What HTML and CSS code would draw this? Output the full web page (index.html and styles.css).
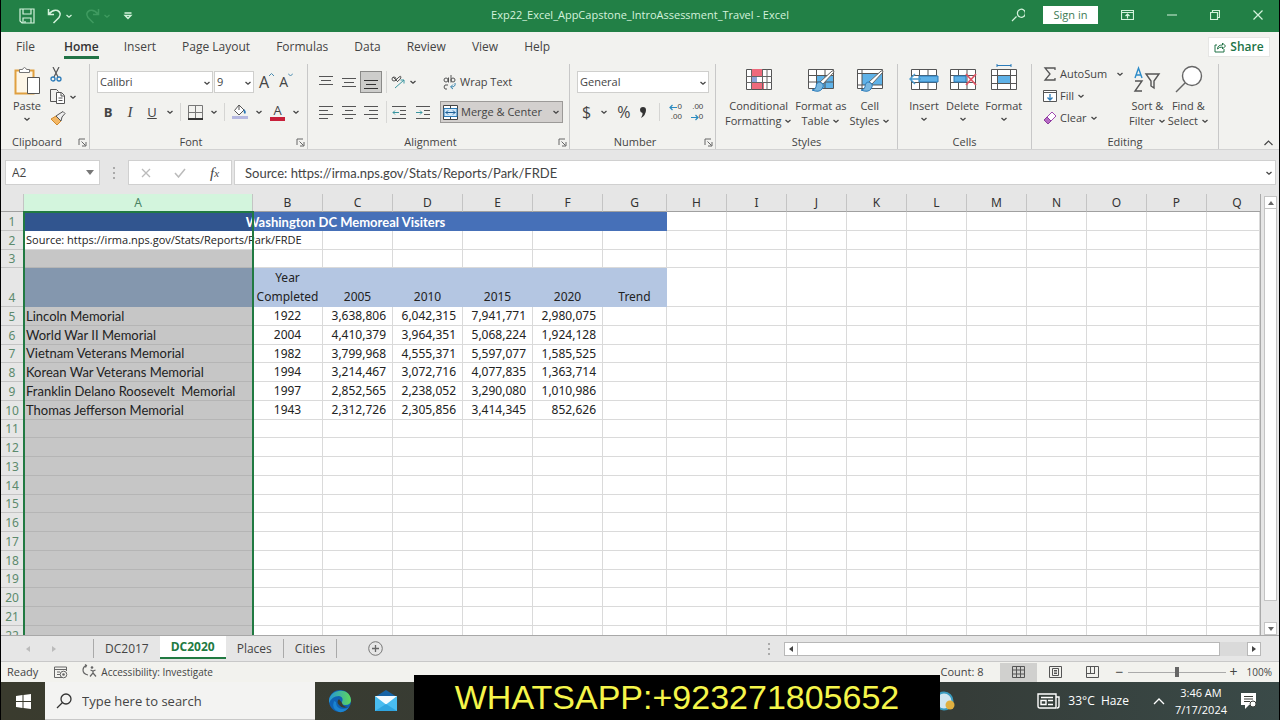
FILE: index.html
```html
<!DOCTYPE html>
<html lang="en">
<head>
<meta charset="utf-8">
<title>Exp22_Excel_AppCapstone_IntroAssessment_Travel - Excel</title>
<link rel="stylesheet" href="styles.css">
</head>
<body>
<svg class="defs" width="0" height="0" aria-hidden="true">
  <symbol id="chev" viewBox="0 0 8 8"><path d="M1.500 3 4 5.200 6.500 3" fill="none" stroke="currentColor" stroke-width="1.300"/></symbol>
  <symbol id="launch" viewBox="0 0 9 9"><path d="M1 7V1h6M3.500 3.500l4 4M8 4v4H4" fill="none" stroke="#666"/></symbol>
  <symbol id="brush" viewBox="0 0 30 30"><path d="M28 8 17 20l-3-2L26 7q2-1 2 1Z" fill="#fff" stroke="#666"/><path d="M14 18q-4 0-4 5-1 3-4 3 7 3 10-1 2-3 1-5Z" fill="#7ab8e0" stroke="#2b7bb9"/></symbol>
</svg>

<header class="titlebar">
  <div class="quick">
    <button aria-label="Save"><svg width="16" height="16" viewBox="0 0 16 16"><path d="M1 1h14v14H3l-2-2ZM4 1v5h8V1M4 15v-5h8v5M6 15v-2" fill="none" stroke="currentColor" stroke-width="1.200"/></svg></button>
    <button aria-label="Undo"><svg width="15" height="16" viewBox="0 0 15 16"><path d="M1.500 1v5.500H7M2 6q4-5 8.500-3.500Q15 5 12 9.500L6.500 15" fill="none" stroke="currentColor" stroke-width="1.500"/></svg><svg class="chev"><use href="#chev"/></svg></button>
    <button class="dim" aria-label="Redo"><svg width="15" height="16" viewBox="0 0 15 16"><path d="M13.500 1v5.500H8M13 6Q9 1 4.500 2.500 0 5 3 9.500L8.500 15" fill="none" stroke="currentColor" stroke-width="1.500"/></svg><svg class="chev"><use href="#chev"/></svg></button>
    <button aria-label="Customize toolbar"><svg width="10" height="8" viewBox="0 0 10 8"><path d="M1.500 1h7M2 3.500l3 3 3-3Z" fill="none" stroke="currentColor" stroke-width="1.300"/></svg></button>
  </div>
  <div class="doc-title">Exp22_Excel_AppCapstone_IntroAssessment_Travel - Excel</div>
  <div class="window">
    <button aria-label="Search"><svg width="14" height="14" viewBox="0 0 14 14"><path d="M5.500 8.500 1 13M9 1.500a4 4 0 1 1 0 7.500 4 4 0 0 1 0-7.500Z" fill="none" stroke="currentColor" stroke-width="1.200"/></svg></button>
    <button class="signin">Sign in</button>
    <button aria-label="Ribbon display options"><svg width="13" height="10" viewBox="0 0 13 10"><path d="M.5.5h12v9H.5ZM.5 2.500h12M6.500 8.500V4M4.500 6l2-2 2 2" fill="none" stroke="currentColor" stroke-width="1.200"/></svg></button>
    <button aria-label="Minimize"><svg width="10" height="10" viewBox="0 0 10 10"><path d="M0 5h10" stroke="currentColor"/></svg></button>
    <button aria-label="Restore"><svg width="10" height="10" viewBox="0 0 10 10"><path d="M.5 2.500h7v7h-7ZM2.500 2.500v-2h7v7h-2" fill="none" stroke="currentColor" stroke-width="1.200"/></svg></button>
    <button aria-label="Close"><svg width="10" height="10" viewBox="0 0 10 10"><path d="m.5.5 9 9m0-9-9 9" stroke="currentColor" stroke-width="1.200"/></svg></button>
  </div>
</header>

<nav class="tabs">
  <button>File</button><button class="active">Home</button><button>Insert</button><button>Page Layout</button><button>Formulas</button><button>Data</button><button>Review</button><button>View</button><button>Help</button>
  <button class="share"><svg width="12" height="12" viewBox="0 0 12 12"><path d="M3 4H1v7h9V8M3.500 8q0-4 5-4V2l3 3-3 3V6Q5 6 3.500 8Z" fill="none" stroke="currentColor"/></svg>Share</button>
</nav>

<section class="ribbon" aria-label="Ribbon">
  <div class="group clipboard">
    <div class="tools">
      <button class="big"><svg width="27" height="30" viewBox="0 0 27 30"><path d="M1.500 4.500h18v23h-18Z" fill="#fdf6e8" stroke="#e0a040" stroke-width="2"/><path d="M5.500 6.500v-3h3q2-4 4 0h3v3Z" fill="#fff" stroke="#777"/><path d="M13.500 11.500h12v16h-12Z" fill="#fff" stroke="#555"/></svg><span>Paste</span><svg class="chev"><use href="#chev"/></svg></button>
      <div class="stack">
        <button aria-label="Cut"><svg width="12" height="15" viewBox="0 0 12 15"><path d="m3 0 5 10M9 0 4 10" stroke="#555" stroke-width="1.200"/><circle cx="3" cy="12" r="2" fill="none" stroke="#2b7bb9" stroke-width="1.300"/><circle cx="9" cy="12" r="2" fill="none" stroke="#2b7bb9" stroke-width="1.300"/></svg></button>
        <button aria-label="Copy"><svg width="16" height="15" viewBox="0 0 16 15"><path d="M6 12.500H.5V.5h6l2 2" fill="none" stroke="#555"/><path d="M6.500 3.500h5l3 3v8h-8ZM11 4v3h3M8.500 9h4M8.500 11.500h4" fill="#fff" stroke="#555"/></svg><svg class="chev"><use href="#chev"/></svg></button>
        <button aria-label="Format Painter"><svg width="16" height="15" viewBox="0 0 16 15"><path d="m1 8 5-3 5 5-4 4Z" fill="#f3b765" stroke="#d18a2c"/><path d="m6 5 3-2 4-2.500 2 2L12 6l-1 4Z" fill="#eee" stroke="#555"/></svg></button>
      </div>
    </div>
    <div class="caption"><span>Clipboard</span><button aria-label="Clipboard settings"><svg width="9" height="9"><use href="#launch"/></svg></button></div>
  </div>

  <div class="group font">
    <div class="rows">
      <div class="line">
        <label class="pick name"><select aria-label="Font"><option>Calibri</option></select><svg class="chev"><use href="#chev"/></svg></label>
        <label class="pick size"><select aria-label="Font size"><option>9</option></select><svg class="chev"><use href="#chev"/></svg></label>
        <button class="grow" aria-label="Increase font size"><b class="a16">A</b><svg width="5" height="4" viewBox="0 0 5 4"><path d="m0 3 2.500-2.500L5 3" fill="none" stroke="#4a8bb0"/></svg></button>
        <button class="grow" aria-label="Decrease font size"><b class="a14">A</b><svg width="5" height="4" viewBox="0 0 5 4"><path d="M0 .5 2.500 3 5 .5" fill="none" stroke="#4a8bb0"/></svg></button>
      </div>
      <div class="line styles-line">
        <button class="glyph bold">B</button><button class="glyph ital">I</button><button class="glyph under">U</button><button aria-label="Underline options"><svg class="chev"><use href="#chev"/></svg></button>
        <i class="bar"></i>
        <button aria-label="Borders"><svg width="15" height="15" viewBox="0 0 15 15"><path d="M.5.5h14v14H.5ZM7.500 0v14M0 7.500h15" fill="none" stroke="#777"/><path d="M0 14h15" stroke="#333" stroke-width="2"/></svg></button><button aria-label="Border options"><svg class="chev"><use href="#chev"/></svg></button>
        <i class="bar"></i>
        <button aria-label="Fill color"><svg width="16" height="16" viewBox="0 0 16 16"><path d="m7 1 5 5-5 5-4.500-4.500ZM7 1v5" fill="#fff" stroke="#555"/><path d="M12 5q3 3 1 5-2-1-1-5" fill="#2b7bb9"/><path d="M0 12h16v3H0Z" fill="#b5b8e0"/></svg></button><button aria-label="Fill options"><svg class="chev"><use href="#chev"/></svg></button>
        <button class="glyph color">A</button><button aria-label="Font color options"><svg class="chev"><use href="#chev"/></svg></button>
      </div>
    </div>
    <div class="caption"><span>Font</span><button aria-label="Font settings"><svg width="9" height="9"><use href="#launch"/></svg></button></div>
  </div>

  <div class="group align">
    <div class="tools">
      <div class="pad">
        <button aria-label="Top align"><svg width="14" height="13" viewBox="0 0 14 13"><path d="M0 .5h14M2 4.500h10M0 8.500h14" stroke="#555"/></svg></button>
        <button aria-label="Middle align"><svg width="14" height="13" viewBox="0 0 14 13"><path d="M0 2.500h14M2 6.500h10M0 10.500h14" stroke="#555"/></svg></button>
        <button class="on" aria-label="Bottom align"><svg width="14" height="13" viewBox="0 0 14 13"><path d="M0 4.500h14M2 8.500h10M0 12.500h14" stroke="#333"/></svg></button>
        <button class="lined wide" aria-label="Orientation"><svg width="16" height="14" viewBox="0 0 16 14"><circle cx="4" cy="4" r="2" fill="none" stroke="#555"/><path d="m3 2 5 5M5 6l4-4M8 6q3-2 3-4 0-1.500-2 0" fill="none" stroke="#555"/><path d="m5 13 9-8M10.500 5H14v3.500" fill="none" stroke="#3a96a0"/></svg><svg class="chev"><use href="#chev"/></svg></button>
        <button aria-label="Align left"><svg width="14" height="13" viewBox="0 0 14 13"><path d="M0 .5h14M0 4.500h9M0 8.500h14M0 12.500h9" stroke="#555"/></svg></button>
        <button aria-label="Center"><svg width="14" height="13" viewBox="0 0 14 13"><path d="M0 .5h14M3 4.500h8M0 8.500h14M3 12.500h8" stroke="#555"/></svg></button>
        <button aria-label="Align right"><svg width="14" height="13" viewBox="0 0 14 13"><path d="M0 .5h14M5 4.500h9M0 8.500h14M5 12.500h9" stroke="#555"/></svg></button>
        <button class="lined" aria-label="Decrease indent"><svg width="14" height="13" viewBox="0 0 14 13"><path d="M0 .5h14M8 4.500h6M8 8.500h6M0 12.500h14" stroke="#555"/><path d="M7 6.500H1M3 4.500l-2 2 2 2" fill="none" stroke="#3a96a0"/></svg></button>
        <button aria-label="Increase indent"><svg width="14" height="13" viewBox="0 0 14 13"><path d="M0 .5h14M8 4.500h6M8 8.500h6M0 12.500h14" stroke="#555"/><path d="M0 6.500h6M4 4.500l2 2-2 2" fill="none" stroke="#3a96a0"/></svg></button>
      </div>
      <div class="wraps">
        <button class="text-tool"><svg width="14" height="15" viewBox="0 0 14 15"><circle cx="3" cy="5" r="2" fill="none" stroke="#555"/><path d="M5.500 2.500v5M8 0v7.500M5 10H2q-2 2 0 4h2" fill="none" stroke="#555"/><circle cx="10" cy="5" r="2" fill="none" stroke="#555"/><path d="M12 8q1 4-4 4M10 9.500 7.500 12l2.500 2" fill="none" stroke="#3a86b0"/></svg>Wrap Text</button>
        <button class="text-tool on"><svg width="15" height="15" viewBox="0 0 15 15"><path d="M.5.5h14v14H.5Z" fill="#fff" stroke="#444"/><path d="M1 3.500h13v8H1Z" fill="#cfe6f7" stroke="#2b7bb9"/><path d="M7.500 1v2.500M7.500 12v2.500" stroke="#444"/><path d="M2.500 7.500h10M5 5.500l-2 2 2 2M10 5.500l2 2-2 2" fill="none" stroke="#1c5f96"/></svg>Merge &amp; Center<svg class="chev end"><use href="#chev"/></svg></button>
      </div>
    </div>
    <div class="caption"><span>Alignment</span><button aria-label="Alignment settings"><svg width="9" height="9"><use href="#launch"/></svg></button></div>
  </div>

  <div class="group number">
    <div class="rows">
      <div class="line"><label class="pick format"><select aria-label="Number format"><option>General</option></select><svg class="chev"><use href="#chev"/></svg></label></div>
      <div class="line num-line">
        <button class="sym">$</button><button aria-label="Currency options"><svg class="chev"><use href="#chev"/></svg></button><button class="sym">%</button>
        <button aria-label="Comma style"><svg width="8" height="13" viewBox="0 0 8 13"><path d="M1 4a3 3 0 0 1 6 0q0 5-5 8 2-3 1.500-5Q1 6.500 1 4Z" fill="#333"/></svg></button>
        <i class="bar"></i>
        <button class="dec" aria-label="Increase decimal"><span><svg width="8" height="7" viewBox="0 0 8 7"><path d="M8 3.500H1M3.500 1 1 3.500 3.500 6" fill="none" stroke="#2b8bc0" stroke-width="1.200"/></svg>0</span><span>.00</span></button>
        <button class="dec" aria-label="Decrease decimal"><span>.00</span><span><svg width="8" height="7" viewBox="0 0 8 7"><path d="M0 3.500h7M4.500 1 7 3.500 4.500 6" fill="none" stroke="#2b8bc0" stroke-width="1.200"/></svg>0</span></button>
      </div>
    </div>
    <div class="caption"><span>Number</span><button aria-label="Number settings"><svg width="9" height="9"><use href="#launch"/></svg></button></div>
  </div>

  <div class="group looks">
    <div class="tools">
      <button class="big"><svg width="30" height="30" viewBox="0 0 30 30"><path d="M2.500 5.500h25v20h-25Z" fill="#fff" stroke="#555"/><path d="M7 5h11v7H7ZM7 18h13v7H7Z" fill="#ee6a7c"/><path d="M7 12h6v6H7Z" fill="#8fa4d8"/><path d="M7.500 5v21M18.500 5v21M23 5v21M2 12.500h26M2 18.500h26" fill="none" stroke="#666"/></svg><span>Conditional<br>Formatting <svg class="chev"><use href="#chev"/></svg></span></button>
      <button class="big"><svg width="30" height="30" viewBox="0 0 30 30"><path d="M2.500 5.500h25v19h-25Z" fill="#fff" stroke="#555"/><path d="M10 12h17v12H10Z" fill="#5fb2e8"/><path d="M10.500 5v20M19 5v20M2 11.500h26M2 18h26" fill="none" stroke="#555"/><use href="#brush"/></svg><span>Format as<br>Table <svg class="chev"><use href="#chev"/></svg></span></button>
      <button class="big"><svg width="30" height="30" viewBox="0 0 30 30"><path d="M2.500 5.500h25v19h-25Z" fill="#fff" stroke="#555"/><path d="M7 10h20v11H7Z" fill="#5fb2e8"/><path d="M7 5v20M2 9.500h26M2 21h26" fill="none" stroke="#555"/><use href="#brush"/></svg><span>Cell<br>Styles <svg class="chev"><use href="#chev"/></svg></span></button>
    </div>
    <div class="caption"><span>Styles</span></div>
  </div>

  <div class="group cells">
    <div class="tools">
      <button class="big"><svg width="30" height="30" viewBox="0 0 30 30"><path d="M2.500 5.500h25v20h-25Z" fill="#fff" stroke="#555"/><path d="M10.500 5v20M19 5v20M2 11.500h26M2 18.500h26" stroke="#555"/><path d="M10 12h19v6H10Z" fill="#5fb2e8" stroke="#2b7bb9"/><path d="M12 15H1M6 10l-5 5 5 5" fill="none" stroke="#4a9cd0" stroke-width="1.500"/></svg><span>Insert</span><svg class="chev"><use href="#chev"/></svg></button>
      <button class="big"><svg width="30" height="30" viewBox="0 0 30 30"><path d="M2.500 5.500h25v20h-25Z" fill="#fff" stroke="#555"/><path d="M10.500 5v20M19 5v20M2 11.500h26M2 18.500h26" stroke="#555"/><path d="M6 12h12v6H6Z" fill="#5fb2e8" stroke="#2b7bb9"/><path d="m18 10 10 11M28 10 18 21" stroke="#e05565" stroke-width="1.800"/></svg><span>Delete</span><svg class="chev"><use href="#chev"/></svg></button>
      <button class="big"><svg width="30" height="30" viewBox="0 0 30 30"><path d="M2.500 5.500h25v20h-25Z" fill="#fff" stroke="#555"/><path d="M9 12h12v7H9Z" fill="#5fb2e8"/><path d="M8.500 5v20M21.500 5v20M2 11.500h26M2 19.500h26" stroke="#555"/><path d="M8 1.500h14M8 0v3M22 0v3" stroke="#2b7bb9"/></svg><span>Format</span><svg class="chev"><use href="#chev"/></svg></button>
    </div>
    <div class="caption"><span>Cells</span></div>
  </div>

  <div class="group edit">
    <div class="tools">
      <div class="stack">
        <button class="text-tool"><svg width="14" height="14" viewBox="0 0 14 14"><path d="M12 3V1H2l5 6-5 6h10v-2" fill="none" stroke="#555" stroke-width="1.300"/></svg>AutoSum<svg class="chev end"><use href="#chev"/></svg></button>
        <button class="text-tool"><svg width="14" height="14" viewBox="0 0 14 14"><path d="M.5 1.500h13v11H.5ZM0 3.500h14" fill="#fff" stroke="#555"/><path d="M7 5v6M4.500 8.500 7 11l2.500-2.500" fill="none" stroke="#2b7bb9" stroke-width="1.300"/></svg>Fill <svg class="chev"><use href="#chev"/></svg></button>
        <button class="text-tool"><svg width="14" height="14" viewBox="0 0 14 14"><path d="m1 9 8-8 4 4-8 8Z" fill="#fff" stroke="#a04ab0"/><path d="m1 9 3-3 4 4-3 3Z" fill="#b66cc4" stroke="#8c3a9c"/></svg>Clear <svg class="chev"><use href="#chev"/></svg></button>
      </div>
      <button class="big"><svg width="28" height="30" viewBox="0 0 28 30"><path d="M2 14 5.500 4 9 14M3 11h5" fill="none" stroke="#2b8bc9" stroke-width="1.400"/><path d="M2 17h7L2 27h7M13 10h13l-5 7v7l-3-2v-5Z" fill="none" stroke="#555" stroke-width="1.400"/></svg><span>Sort &amp;<br>Filter <svg class="chev"><use href="#chev"/></svg></span></button>
      <button class="big"><svg width="30" height="30" viewBox="0 0 30 30"><circle cx="19" cy="12" r="9.500" fill="#fff" stroke="#666" stroke-width="1.400"/><path d="m12 19-9 9" stroke="#666" stroke-width="1.400"/></svg><span>Find &amp;<br>Select <svg class="chev"><use href="#chev"/></svg></span></button>
    </div>
    <div class="caption"><span>Editing</span></div>
  </div>
  <button class="collapse" aria-label="Collapse the ribbon"><svg width="9" height="6" viewBox="0 0 9 6"><path d="m.5 5 4-4 4 4" fill="none" stroke="#444" stroke-width="1.200"/></svg></button>
</section>

<section class="formula" aria-label="Formula bar">
  <label class="namebox"><input value="A2" aria-label="Name box"><svg width="8" height="5" viewBox="0 0 8 5"><path d="M0 0h8L4 5Z" fill="#777"/></svg></label>
  <span class="dots"></span>
  <div class="fx">
    <button aria-label="Cancel"><svg width="10" height="10" viewBox="0 0 10 10"><path d="m1 1 8 8m0-8L1 9" stroke="#bbb" stroke-width="1.300"/></svg></button>
    <button aria-label="Enter"><svg width="12" height="10" viewBox="0 0 12 10"><path d="m1 5 3.500 4L11 1" fill="none" stroke="#bbb" stroke-width="1.500"/></svg></button>
    <button class="fn">f<small>x</small></button>
  </div>
  <label class="entry"><input value="Source: https://irma.nps.gov/Stats/Reports/Park/FRDE" aria-label="Formula"><svg class="chev"><use href="#chev"/></svg></label>
</section>

<main class="work">
  <div class="sheet">
    <table>
      <colgroup><col class="c-head"><col class="c-a"><col class="c-b"><col class="c-num" span="4"><col class="c-g"><col class="c-std" span="9"><col></colgroup>
      <thead></thead>
      <tbody></tbody>
    </table>
    <div class="selection"></div>
  </div>
  <div class="vscroll"><button aria-label="Scroll up"><svg width="6" height="4" viewBox="0 0 6 4"><path d="M0 4h6L3 0Z" fill="#666"/></svg></button><div class="track"><span class="thumb"></span></div><button aria-label="Scroll down"><svg width="6" height="4" viewBox="0 0 6 4"><path d="M0 0h6L3 4Z" fill="#666"/></svg></button></div>
</main>

<div class="sheetbar">
  <div class="arrows"><svg width="4" height="6" viewBox="0 0 4 6"><path d="M4 0v6L0 3Z" fill="#bbb"/></svg><svg width="4" height="6" viewBox="0 0 4 6"><path d="M0 0v6l4-3Z" fill="#bbb"/></svg></div>
  <button>DC2017</button><button class="current">DC2020</button><button>Places</button><button>Cities</button>
  <button class="add" aria-label="New sheet"><svg width="15" height="15" viewBox="0 0 15 15"><circle cx="7.500" cy="7.500" r="6.800" fill="none" stroke="#777"/><path d="M7.500 4v7M4 7.500h7" stroke="#666" stroke-width="1.300"/></svg></button>
  <span class="dots"></span>
  <div class="hscroll"><button aria-label="Scroll left"><svg width="4" height="6" viewBox="0 0 4 6"><path d="M4 0v6L0 3Z" fill="#444"/></svg></button><div class="track"><span class="thumb"></span></div><button aria-label="Scroll right"><svg width="4" height="6" viewBox="0 0 4 6"><path d="M0 0v6l4-3Z" fill="#444"/></svg></button></div>
</div>

<div class="status">
  <span class="ready">Ready</span>
  <svg width="14" height="13" viewBox="0 0 14 13"><path d="M8 11.500H.5V1h12v4M.5 3.500h12M3 6h3M3 8.500h3" fill="none" stroke="#666"/><circle cx="9.500" cy="8.500" r="3.300" fill="none" stroke="#666"/><circle cx="9.500" cy="8.500" r="1.300" fill="#666"/></svg>
  <span class="access"><svg width="15" height="13" viewBox="0 0 15 13"><path d="M6 11Q1 10 1 6q0-3 3-4.500M3 .5l1.500 1L3.500 3.500M8.500 6l2.500 1 2.500-1M11 7v2l-3 3.500M11 9l3 3.500" fill="none" stroke="#666" stroke-width="1.200"/><circle cx="10" cy="3.500" r="1.300" fill="#666"/></svg>Accessibility: Investigate</span>
  <span class="count">Count: 8</span>
  <button class="view on" aria-label="Normal"><svg width="13" height="12" viewBox="0 0 13 12"><path d="M.5.500h12v11H.5ZM4.500 0v12M8.500 0v12M0 4h13M0 8h13" fill="none" stroke="#555"/></svg></button>
  <button class="view" aria-label="Page layout"><svg width="13" height="12" viewBox="0 0 13 12"><path d="M.5.500h12v11H.5ZM3.500 2.500h6v7h-6ZM5 4.500h3M5 6h3M5 7.500h3" fill="none" stroke="#555"/></svg></button>
  <button class="view" aria-label="Page break preview"><svg width="13" height="12" viewBox="0 0 13 12"><path d="M.5.500h12v11H.5ZM4.500 0v7M8.500 0v7M0 7.500h9" fill="none" stroke="#555"/></svg></button>
  <div class="zoom"><button aria-label="Zoom out">−</button><input type="range" min="10" max="190" value="101" aria-label="Zoom"><button aria-label="Zoom in">+</button></div>
  <span class="pct">100%</span>
</div>

<footer class="taskbar">
  <button class="start" aria-label="Start"><svg width="15" height="15" viewBox="0 0 15 15"><path d="M0 2l6.500-1v6H0ZM7.500 1 15 0v7H7.500ZM0 8h6.500v6L0 13ZM7.500 8H15v7l-7.500-1Z" fill="#fff"/></svg></button>
  <label class="search"><svg width="16" height="16" viewBox="0 0 16 16"><circle cx="10" cy="6" r="5" fill="none" stroke="#333" stroke-width="1.300"/><path d="M6.500 9.500 1 15" stroke="#333" stroke-width="1.300"/></svg><input placeholder="Type here to search" aria-label="Search"></label>
  <button class="app" aria-label="Edge"><svg width="24" height="24" viewBox="0 0 24 24"><defs><linearGradient id="eg" x1="0" x2="1"><stop offset="0" stop-color="#2496d8"/><stop offset="1" stop-color="#5fd85a"/></linearGradient></defs><circle cx="12" cy="12" r="11" fill="#0f62b5"/><path d="M1 12C1 0 22-3 23 11q0 5-6 5-4 0-3-3 2-5-3-6Q4 7 1 14Z" fill="url(#eg)"/><path d="M8 13q0 7 7 7 4 0 6-2-4 6-10 5-8-3-5-11Z" fill="#1b83d0"/><path d="M11 10q-3 3 0 6 3 4 9 2-5 0-6-4Z" fill="#3a3d30"/></svg></button>
  <button class="app" aria-label="Mail"><svg width="24" height="22" viewBox="0 0 24 22"><path d="M1 7 12 0l11 7v14H1Z" fill="#1564a8"/><path d="M1 6h22v15H1Z" fill="#49bdf0"/><path d="M1 6h22l-11 8.500Z" fill="#f4fbff"/><path d="m1 21 11-7 11 7Z" fill="#2fa5e0"/></svg></button>
  <div class="tray">
    <svg class="peek" width="16" height="20" viewBox="0 0 16 20"><circle cx="5" cy="10" r="8.500" fill="#cfe6f0" stroke="#3a9cc0" stroke-width="2"/><circle cx="11" cy="14" r="4.500" fill="#e0b040"/></svg>
    <span class="weather"><svg width="23" height="16" viewBox="0 0 23 16"><path d="M1 1h18v14H3q-2 0-2-2ZM19 4h3v9q0 2-2 2M4 4.500h12M4 7.500h5v4H4ZM11 7.500h5M11 11.500h5" fill="none" stroke="#fff" stroke-width="1.400"/></svg>33°C&nbsp; Haze</span>
    <svg width="12" height="7" viewBox="0 0 12 7"><path d="m1 6 5-5 5 5" fill="none" stroke="#fff" stroke-width="1.300"/></svg>
    <time>3:46 AM<br>7/17/2024</time>
    <button aria-label="Notifications"><svg width="16" height="16" viewBox="0 0 16 16"><path d="M0 0h15v12H8l-4 4v-4H0Z" fill="#fff"/><path d="M3 3.500h9M3 6h9M3 8.500h6" stroke="#3a3d38"/><circle cx="12" cy="11" r="3" fill="#fff" stroke="#3a3d38"/></svg></button>
  </div>
</footer>
<div class="banner">WHATSAPP:+923271805652</div>
<script src="sheet.js"></script>
</body>
</html>
```
FILE: styles.css
```css
* { box-sizing: border-box; }
body {
  margin: 0;
  height: 100vh;
  display: flex;
  flex-direction: column;
  position: relative;
  overflow: hidden;
  padding: 0 1px;
  background: #000;
  color: #444;
  font: 11px/16px "Open Sans", "Noto Sans", sans-serif;
}
body > * { flex: none; }
.defs { position: absolute; }
button, input, select {
  font: inherit;
  color: inherit;
  border: 0;
  margin: 0;
  padding: 0;
  background: none;
}
button { display: inline-flex; align-items: center; justify-content: center; white-space: nowrap; }
input { min-width: 0; outline: 0; }
svg { display: block; flex: none; }
svg.chev { width: 8px; height: 8px; }

.titlebar {
  height: 32px;
  display: grid;
  grid-template-columns: 1fr auto 1fr;
  align-items: center;
  background: #228046;
  color: #d4f2dc;
}
.quick { display: flex; align-items: center; gap: 12px; padding-left: 18px; }
.quick button { gap: 3px; }
.quick .dim { color: #3f9a60; }
.doc-title { padding-bottom: 2px; }
.window { display: flex; align-items: center; justify-content: flex-end; padding: 0 16px 2px 0; gap: 33px; }
.window .signin { height: 18px; width: 55px; background: #fff; color: #3d7a55; margin: 0 -10px 0 -15px; }

.tabs { display: flex; align-items: center; height: 30px; background: #f2f2ef; font-size: 12px; padding: 0 9px 0 15px; gap: 26px; }
.tabs button { height: 24px; }
.tabs .active { color: #333; font-weight: 600; border-bottom: 3px solid #217346; border-top: 3px solid transparent; margin: 0 -1px 0 3px; }
.tabs .share { margin-left: auto; background: #fff; color: #217346; font-weight: 600; width: 62px; height: 20px; gap: 4px; border: 1px solid #e6e6e4; }

.ribbon { display: flex; background: #f2f2ef; height: 88px; border-bottom: 1px solid #d2d2d2; position: relative; }
.group { display: flex; flex-direction: column; border-right: 1px solid #c8c8c8; margin: 2px 0 0; position: relative; }
.caption { display: flex; justify-content: center; margin-top: auto; line-height: 14px; }
.caption button { position: absolute; right: 2px; bottom: 2px; }
.tools { display: flex; }
.big { flex-direction: column; justify-content: flex-start; line-height: 15px; text-align: center; }
.big > span { margin-top: 4px; }
.big span .chev { display: inline-block; }
.big > .chev { margin-top: 2px; }
.stack { display: flex; flex-direction: column; align-items: flex-start; }
.rows { display: flex; flex-direction: column; gap: 8px; padding-top: 7px; }
.line { display: flex; align-items: center; height: 22px; }
.bar { width: 1px; height: 18px; background: #d5d5d3; }
.pick { position: relative; background: #fff; border: 1px solid #cfcfcd; height: 22px; display: block; }
.pick select { appearance: none; width: 100%; height: 20px; padding-left: 2px; outline: 0; }
.pick .chev { position: absolute; right: 1px; top: 7px; pointer-events: none; }

.clipboard { width: 89px; }
.clipboard .tools { padding: 2px 0 0 11px; gap: 6px; }
.clipboard .caption { padding-right: 16px; }
.clipboard .stack { gap: 7px; padding-top: 1px; margin-left: 2px; }
.clipboard .stack button { gap: 3px; height: 15px; }
.clipboard .big { width: 30px; }
.clipboard .big > span { margin-top: 2px; }

.font { width: 218px; padding-left: 7px; }
.font .caption { padding-right: 22px; }
.pick.name { width: 116px; }
.pick.size { width: 40px; margin-left: 1px; }
.grow { margin-left: 5px; align-items: flex-start; line-height: 18px; }
.grow b { font-weight: 400; }
.a16 { font-size: 16px; }
.a14 { font-size: 14px; }
.glyph { font-size: 13px; width: 14px; }
.bold { font-weight: 700; }
.ital { font-style: italic; font-family: "Liberation Serif", serif; font-size: 15px; }
.under { text-decoration: underline; }
.color { border-bottom: 4px solid #c8203a; line-height: 13px; width: 15px; }
.styles-line { padding-left: 4px; gap: 8px; }
.styles-line .bar { margin: 0 -1px; }
.styles-line button:has(> .chev) { margin: 0 -1px; }

.align { width: 262px; }
.align .caption { padding-right: 16px; }
.align .tools { padding: 7px 6px 0 7px; justify-content: space-between; }
.pad { display: grid; grid-template-columns: 22px 23px 22px 29px 23px; grid-auto-rows: 22px; row-gap: 8px; }
.pad .on { background: #cdcdcb; border: 1px solid #8a8a88; }
.pad .lined { border-left: 1px solid #d8d8d6; margin-left: 4px; }
.pad .wide { grid-column: span 2; justify-content: flex-start; padding-left: 3px; gap: 3px; }
.wraps { display: flex; flex-direction: column; gap: 8px; width: 123px; }
.text-tool { gap: 3px; justify-content: flex-start; font-size: 11px; }
.wraps .text-tool { height: 22px; padding: 0 3px; }
.wraps .on { background: #d3d0ce; border: 1px solid #9c9a98; padding: 0 2px; }
.text-tool .end { margin-left: auto; }

.number { width: 146px; padding-left: 7px; }
.number .caption { padding-right: 22px; }
.pick.format { width: 132px; }
.num-line { gap: 9px; padding-left: 5px; }
.sym { font-size: 16px; }
.num-line .bar { margin: 0 0 0 3px; }
.dec { flex-direction: column; font: 8px/10px "Liberation Sans", sans-serif; align-items: flex-end; }
.dec span { display: flex; align-items: center; }

.looks { width: 182px; }
.looks .tools { padding-left: 9px; gap: 3px; }
.cells { width: 134px; }
.cells .tools { padding-left: 10px; gap: 6px; }
.cells .big { min-width: 32px; }
.edit { width: 187px; }
.edit .tools { padding-left: 11px; gap: 4px; }
.edit .stack { width: 81px; gap: 6px; padding-top: 2px; margin-right: 1px; }
.edit .stack .text-tool { height: 16px; }
.edit .stack .text-tool:first-child { width: 100%; }
.edit .big + .big { margin-left: -2px; }
.collapse { position: absolute; right: 6px; bottom: 3px; }

.formula { display: flex; background: #e6e6e6; padding: 10px 3px 0 4px; height: 44px; font-size: 12px; }
.formula > * { height: 25px; }
.namebox { width: 95px; background: #fff; border: 1px solid #d0d0d0; display: flex; align-items: center; padding: 0 5px 0 6px; font-size: 12px; }
.namebox input { flex: 1; }
.dots { width: 2px; height: 13px; background: repeating-linear-gradient(#aaa 0 2px, transparent 2px 5px); }
.formula .dots { height: 12px; margin: 7px 13px 0; }
.fx { width: 104px; background: #fff; border: 1px solid #d0d0d0; display: flex; align-items: center; justify-content: space-around; }
.fn { font: italic 15px/18px "Liberation Serif", serif; }
.fn small { font-size: 11px; }
.entry { flex: 1; background: #fff; border: 1px solid #d0d0d0; display: flex; align-items: center; margin-left: 2px; padding: 0 2px 0 10px; font: 13px/18px Lato, sans-serif; }
.entry input { flex: 1; }

.work { flex: 1 1 0; min-height: 0; display: flex; background: #e6e6e6; border-bottom: 1px solid #a8a8a8; }
.sheet { flex: 1; min-width: 0; position: relative; overflow: hidden; border-right: 1px solid #aaa; }
table { width: 100%; table-layout: fixed; border-collapse: separate; border-spacing: 0; font: 12px/18px "Noto Sans", sans-serif; color: #222; }
.c-head { width: 23px; }
.c-a { width: 229px; }
.c-b, .c-num { width: 70px; }
.c-g { width: 64px; }
.c-std { width: 60px; }
th { font-weight: 400; font-size: 12px; background: #e6e6e6; color: #333; padding: 0; border-right: 1px solid #c4c4c4; }
thead th { height: 18px; line-height: 17px; border-bottom: 1px solid #a0a0a0; }
thead th:last-child { padding-left: 7px; border-right: 0; }
thead th.picked { background: #d3f5dd; color: #4b8363; }
tbody th { color: #5c8a6d; border-bottom: 1px solid #c4c4c4; vertical-align: bottom; line-height: 17px; }
tbody tr { height: 19px; }
tbody tr:nth-child(4n + 3) { height: 18px; }
tbody tr.tall { height: 38px; }
td { padding: 0 2px; background: #fff; border-right: 1px solid #dadada; border-bottom: 1px solid #dadada; line-height: 18px; white-space: nowrap; vertical-align: bottom; height: inherit; }
tbody tr:nth-child(4n + 3) td, tbody tr:nth-child(4n + 3) th { line-height: 17px; }
td.sel { background: #c6c6c6; border-color: #b5b5b5; font-family: Lato, sans-serif; font-size: 13px; }
td.title { background: linear-gradient(90deg, #31558f 229px, #4670b8 229px); color: #fff; font: 700 13px/18px Lato, sans-serif; text-align: center; border: 0; }
td.source { font-family: "Open Sans", sans-serif; font-size: 11px; background: #fff; overflow: visible; }
td.band { background: #b4c6e2; border-color: #b4c6e2; text-align: center; line-height: 19px; padding: 0; }
td.band.sel { background: #8497ae; border-color: #8497ae; }
td.year { text-align: center; }
td.amount { text-align: right; padding-right: 6px; }
.selection { position: absolute; left: 22px; top: 17px; width: 231px; bottom: -3px; border: 2px solid #217a42; pointer-events: none; }
.vscroll { width: 18px; padding: 2px 2px 0 3px; display: flex; flex-direction: column; }
.vscroll button { height: 13px; background: #fff; border: 1px solid #c4c4c4; }
.vscroll .track { flex: 1; }
.vscroll .thumb { display: block; height: 95%; background: #fff; border: 1px solid #c4c4c4; border-top: 0; }

.sheetbar { display: flex; background: #e6e6e6; height: 26px; padding-right: 18px; font-size: 12px; border-bottom: 1px solid #c8c8c8; }
.arrows { width: 93px; display: flex; align-items: center; gap: 22px; padding-left: 25px; border-right: 1px solid #aaa; margin: 3px 0; }
.sheetbar > button { padding: 0 11px; position: relative; }
.sheetbar > button:nth-of-type(n + 3):not(.add) { border-right: 1px solid #aaa; margin: 3px 0; padding: 0 11px; }
.sheetbar .current { background: #fff; color: #217a42; font-weight: 700; border-bottom: 2px solid #217a42; padding: 0 11px; margin-bottom: 2px; }
.sheetbar .add { margin-left: 20px; }
.sheetbar .dots { margin: 7px 14px 0 auto; }
.hscroll { width: 477px; display: flex; padding: 6px 0 5px; }
.hscroll button { width: 14px; background: #fff; border: 1px solid #b8b8b8; }
.hscroll .track { flex: 1; background: #dadada; }
.hscroll .thumb { display: block; height: 100%; width: 94%; background: #fff; border: 1px solid #b8b8b8; border-left: 0; }

.status { display: flex; align-items: center; height: 20px; background: #f2f2ee; padding: 0 7px 0 6px; font-size: 10px; }
.ready { font-size: 11px; margin-right: 16px; }
.access { display: flex; gap: 4px; margin-left: 14px; }
.count { margin: 0 16px 0 auto; font-size: 11px; }
.view { width: 37px; height: 19px; }
.view.on { background: #d0d0ce; }
.zoom { display: flex; align-items: center; width: 122px; margin: 0 9px 0 5px; }
.zoom button { font-size: 14px; }
.zoom input { appearance: none; flex: 1; height: 14px; margin: 0 4px; background: linear-gradient(#aaa, #aaa) center / 100% 1px no-repeat; }
.zoom input::-webkit-slider-thumb { appearance: none; width: 4px; height: 10px; background: #666; }
.pct { font-size: 10px; }

.taskbar { display: flex; height: 38px; background: linear-gradient(90deg, #3a3b2e, #353c38 75%, #3a4a48); color: #fff; }
.start { width: 44px; }
.search { width: 270px; background: #f3f3f2; border: 1px solid #c8c8c8; border-width: 0 0 1px; display: flex; align-items: center; gap: 10px; padding-left: 11px; font-size: 13px; color: #333; }
.search input { flex: 1; }
.search input::placeholder { color: #444; opacity: 1; }
.app { width: 46px; }
.search + .app { margin-left: 2px; }
.tray { margin-left: auto; display: flex; align-items: center; gap: 20px; padding-right: 22px; font-size: 12px; }
.weather { display: flex; align-items: center; gap: 8px; margin-right: 4px; }
.peek { margin-right: 62px; }
time { text-align: center; font-size: 11px; line-height: 17px; margin: 0 -6px 0 -10px; }
.banner { position: absolute; left: 50%; transform: translateX(-226px); width: 526px; bottom: 0; height: 45px; background: #000; color: #f5f54a; font: 34px/45px "Liberation Sans", Arial, sans-serif; text-align: center; white-space: nowrap; }
```
FILE: sheet.js
```js
const columns = "ABCDEFGHIJKLMNOPQ".split("");
const rowCount = 22;
const source = "Source: https://irma.nps.gov/Stats/Reports/Park/FRDE";
const heads = ["", "Year<br>Completed", "2005", "2010", "2015", "2020", "Trend"];
const memorials = [
  ["Lincoln Memorial", "1922", "3,638,806", "6,042,315", "7,941,771", "2,980,075"],
  ["World War II Memorial", "2004", "4,410,379", "3,964,351", "5,068,224", "1,924,128"],
  ["Vietnam Veterans Memorial", "1982", "3,799,968", "4,555,371", "5,597,077", "1,585,525"],
  ["Korean War Veterans Memorial", "1994", "3,214,467", "3,072,716", "4,077,835", "1,363,714"],
  ["Franklin Delano Roosevelt&nbsp; Memorial", "1997", "2,852,565", "2,238,052", "3,290,080", "1,010,986"],
  ["Thomas Jefferson Memorial", "1943", "2,312,726", "2,305,856", "3,414,345", "852,626"]
];

document.querySelector("thead").innerHTML =
  "<tr><th></th>" + columns.map((c, i) => `<th scope="col"${i ? "" : ' class="picked"'}>${c}</th>`).join("") + "</tr>";

function cell(row, col) {
  if (row === 4 && col < heads.length) return `<td class="band${col ? "" : " sel"}">${heads[col]}</td>`;
  if (row === 2 && col === 0) return `<td class="source">${source}</td>`;
  const text = (memorials[row - 5] || [])[col] || "";
  const kind = col === 0 ? "sel" : col === 1 ? "year" : "amount";
  return `<td class="${kind}">${text}</td>`;
}

let body = "";
for (let row = 1; row <= rowCount; row++) {
  body += `<tr${row === 4 ? ' class="tall"' : ""}><th scope="row">${row}</th>`;
  let first = 0;
  if (row === 1) {
    body += '<td class="title" colspan="7">Washington DC Memoreal Visiters</td>';
    first = 7;
  }
  for (let col = first; col < columns.length; col++) body += cell(row, col);
  body += "</tr>";
}
document.querySelector("tbody").innerHTML = body;
```
